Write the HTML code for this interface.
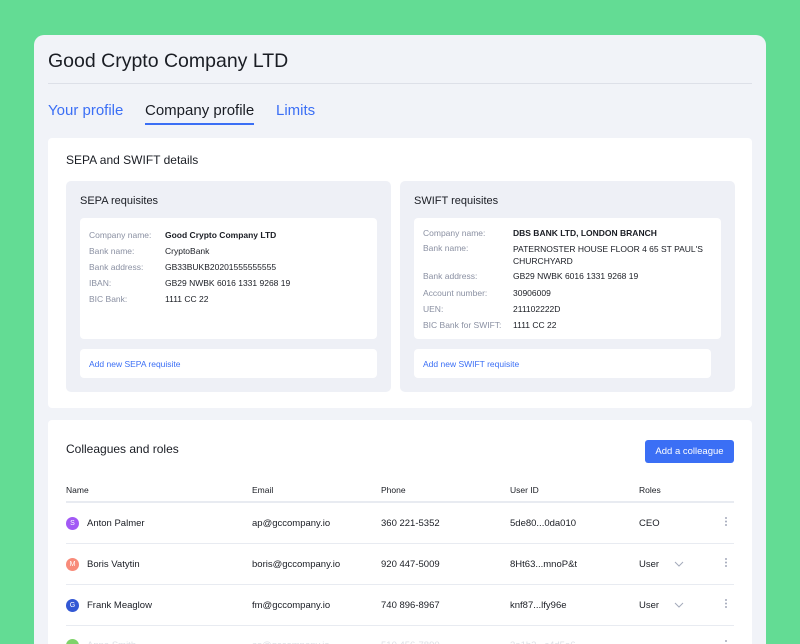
<!DOCTYPE html><html><head><style>
*{box-sizing:border-box;margin:0;padding:0}
html,body{width:800px;height:644px;overflow:hidden}
body{background:#63dc94;font-family:"Liberation Sans",sans-serif;position:relative;color:#1a1d24}
.card{position:absolute;left:34px;top:35px;width:732px;height:609px;background:#f1f3f8;border-radius:10px 10px 0 0}
.a{position:absolute}
.w{background:#fff;border-radius:4px}
.g{background:#eef0f6;border-radius:5px}
.lbl{color:#8a90a2;font-size:8.5px}
.val{font-size:8.5px;color:#1a1d24}
.row{position:absolute;font-size:9.5px}
.hdr{position:absolute;font-size:8.5px;top:485px}
</style></head><body>
<div class="card"></div>
<div class="a" style="left:48px;top:50px;font-size:19.5px;">Good Crypto Company LTD</div>
<div class="a" style="left:48px;top:83px;width:704px;height:1px;background:#dde0e8"></div>
<div class="a" style="left:48px;top:102px;font-size:15px;color:#3b6ff5">Your profile</div>
<div class="a" style="left:145px;top:102px;font-size:15px;">Company profile</div>
<div class="a" style="left:145px;top:123px;width:109px;height:2px;background:#3b6ff5"></div>
<div class="a" style="left:276px;top:102px;font-size:15px;color:#3b6ff5">Limits</div>

<div class="a w" style="left:48px;top:138px;width:704px;height:270px"></div>
<div class="a" style="left:66px;top:153px;font-size:12px">SEPA and SWIFT details</div>
<div class="a g" style="left:66px;top:181px;width:325px;height:211px"></div>
<div class="a" style="left:80px;top:195px;font-size:11px">SEPA requisites</div>
<div class="a w" style="left:80px;top:218px;width:297px;height:121px"></div>
<div class="a w" style="left:80px;top:349px;width:297px;height:29px"></div>
<div class="a" style="left:89px;top:359px;font-size:8.5px;color:#3b6ff5">Add new SEPA requisite</div>
<div class="a lbl" style="left:89px;top:227px;line-height:16px">Company name:<br>Bank name:<br>Bank address:<br>IBAN:<br>BIC Bank:</div>
<div class="a val" style="left:165px;top:227px;line-height:16px"><b>Good Crypto Company LTD</b><br>CryptoBank<br>GB33BUKB20201555555555<br>GB29 NWBK 6016 1331 9268 19<br>1111 CC 22</div>

<div class="a g" style="left:400px;top:181px;width:335px;height:211px"></div>
<div class="a" style="left:414px;top:195px;font-size:11px">SWIFT requisites</div>
<div class="a w" style="left:414px;top:218px;width:307px;height:121px"></div>
<div class="a w" style="left:414px;top:349px;width:297px;height:29px"></div>
<div class="a" style="left:423px;top:359px;font-size:8.5px;color:#3b6ff5">Add new SWIFT requisite</div>
<div class="a lbl" style="left:423px;top:228px">Company name:</div><div class="a val" style="left:513px;top:228px"><b>DBS BANK LTD, LONDON BRANCH</b></div>
<div class="a lbl" style="left:423px;top:243px">Bank name:</div><div class="a val" style="left:513px;top:243px;line-height:12px">PATERNOSTER HOUSE FLOOR 4 65 ST PAUL'S<br>CHURCHYARD</div>
<div class="a lbl" style="left:423px;top:271px">Bank address:</div><div class="a val" style="left:513px;top:271px">GB29 NWBK 6016 1331 9268 19</div>
<div class="a lbl" style="left:423px;top:288px">Account number:</div><div class="a val" style="left:513px;top:288px">30906009</div>
<div class="a lbl" style="left:423px;top:304px">UEN:</div><div class="a val" style="left:513px;top:304px">211102222D</div>
<div class="a lbl" style="left:423px;top:320px">BIC Bank for SWIFT:</div><div class="a val" style="left:513px;top:320px">1111 CC 22</div>

<div class="a w" style="left:48px;top:420px;width:704px;height:240px"></div>
<div class="a" style="left:66px;top:442px;font-size:12px">Colleagues and roles</div>
<div class="a" style="left:645px;top:440px;width:89px;height:23px;background:#3b6ff5;border-radius:3px;color:#fff;font-size:9.5px;text-align:center;line-height:23px">Add a colleague</div>
<div class="hdr" style="left:66px">Name</div><div class="hdr" style="left:252px">Email</div><div class="hdr" style="left:381px">Phone</div><div class="hdr" style="left:510px">User ID</div><div class="hdr" style="left:639px">Roles</div>
<div class="a" style="left:66px;top:501px;width:668px;height:2px;background:#e8ebf1"></div>
<div class="a" style="left:66px;top:543px;width:668px;height:1px;background:#e8ebf1"></div>
<div class="a" style="left:66px;top:584px;width:668px;height:1px;background:#e8ebf1"></div>
<div class="a" style="left:66px;top:625px;width:668px;height:1px;background:#e8ebf1"></div>

<div class="a" style="left:66px;top:517px;width:13px;height:13px;border-radius:50%;background:#a259f5;color:#fff;font-size:7px;text-align:center;line-height:13px">S</div>
<div class="row" style="left:87px;top:518px">Anton Palmer</div><div class="row" style="left:252px;top:518px">ap@gccompany.io</div><div class="row" style="left:381px;top:518px">360 221-5352</div><div class="row" style="left:510px;top:518px">5de80...0da010</div><div class="row" style="left:639px;top:518px">CEO</div>
<div class="a" style="left:66px;top:558px;width:13px;height:13px;border-radius:50%;background:#f88b7a;color:#fff;font-size:7px;text-align:center;line-height:13px">M</div>
<div class="row" style="left:87px;top:559px">Boris Vatytin</div><div class="row" style="left:252px;top:559px">boris@gccompany.io</div><div class="row" style="left:381px;top:559px">920 447-5009</div><div class="row" style="left:510px;top:559px">8Ht63...mnoP&amp;t</div><div class="row" style="left:639px;top:559px">User</div>
<div class="a" style="left:66px;top:599px;width:13px;height:13px;border-radius:50%;background:#3358d4;color:#fff;font-size:7px;text-align:center;line-height:13px">G</div>
<div class="row" style="left:87px;top:600px">Frank Meaglow</div><div class="row" style="left:252px;top:600px">fm@gccompany.io</div><div class="row" style="left:381px;top:600px">740 896-8967</div><div class="row" style="left:510px;top:600px">knf87...lfy96e</div><div class="row" style="left:639px;top:600px">User</div>
<div class="a" style="left:66px;top:639px;width:13px;height:13px;border-radius:50%;background:#7ed36a"></div>
<div class="row" style="left:87px;top:640px;color:#dde0e6">Anna Smith</div><div class="row" style="left:252px;top:640px;color:#dde0e6">as@gccompany.io</div><div class="row" style="left:381px;top:640px;color:#dde0e6">510 456-7890</div><div class="row" style="left:510px;top:640px;color:#dde0e6">3a1b2...c4d5e6</div>
<svg class="a" style="left:674px;top:560px" width="10" height="8"><path d="M1 2l4 4 4-4" stroke="#a4aabb" fill="none"/></svg>
<svg class="a" style="left:674px;top:601px" width="10" height="8"><path d="M1 2l4 4 4-4" stroke="#a4aabb" fill="none"/></svg>
<svg class="a" style="left:724px;top:516px" width="4" height="130" fill="#a4aabb"><circle cx="2" cy="2" r="1"/><circle cx="2" cy="5.5" r="1"/><circle cx="2" cy="9" r="1"/><circle cx="2" cy="43" r="1"/><circle cx="2" cy="46.5" r="1"/><circle cx="2" cy="50" r="1"/><circle cx="2" cy="84" r="1"/><circle cx="2" cy="87.5" r="1"/><circle cx="2" cy="91" r="1"/><circle cx="2" cy="125" r="1"/></svg>
</body></html>
